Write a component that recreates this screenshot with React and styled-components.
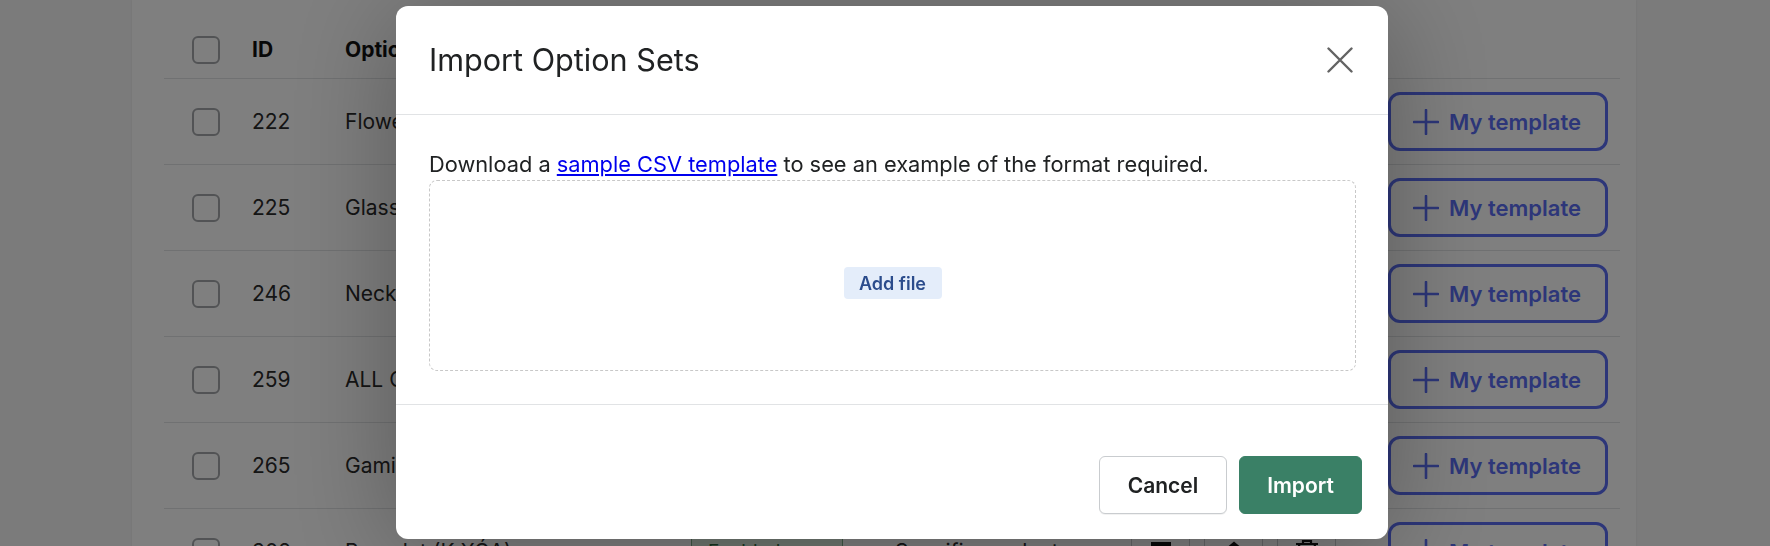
import React from "react";
import styled, { createGlobalStyle } from "styled-components";

const GlobalStyle = createGlobalStyle`
  html, body {
    margin: 0;
    padding: 0;
    height: 546px;
    overflow: hidden;
    background: #f6f6f7;
    font-family: Inter, "Noto Sans", "Liberation Sans", sans-serif;
    color: #202223;
  }
`;

const rows = [
  { id: 222, name: "Flower Options" },
  { id: 225, name: "Glass Engraving" },
  { id: 246, name: "Necklace Options" },
  { id: 259, name: "ALL Collection" },
  { id: 265, name: "Gaming Set" },
  { id: 302, name: "Bracelet (K XÓA)" },
];

const Page = styled.div`
  padding-left: 132px;
  height: 546px;
  overflow: hidden;
`;

const Card = styled.div`
  width: 1504px;
  background: #ffffff;
  padding: 21px 16px 0 32px;
  box-sizing: border-box;
  min-height: 546px;
  box-shadow: 0 0 2px rgba(0, 0, 0, 0.08);
`;

const Row = styled.div`
  display: grid;
  grid-template-columns: 88px 93px 346px 204px 236px 257px 232px;
  align-items: center;
  height: ${(p) => (p.$head ? "57px" : "85px")};
  border-bottom: 1px solid #e1e3e5;
  font-size: 21px;
  color: #2a2a2a;
`;

const Cell = styled.div`
  display: flex;
  align-items: center;
  font-weight: ${(p) => (p.$bold ? 700 : 400)};
  color: ${(p) => (p.$bold ? "#111" : "inherit")};
  white-space: nowrap;
  overflow: hidden;
`;

const CheckCell = styled(Cell)`
  padding-left: 28px;
`;

const Checkbox = styled.span`
  width: 24px;
  height: 24px;
  border: 2px solid #a4a7aa;
  border-radius: 6px;
  background: #fff;
`;

const StatusBadge = styled.span`
  display: inline-flex;
  align-items: center;
  gap: 10px;
  height: 32px;
  padding: 0 16px;
  width: 152px;
  box-sizing: border-box;
  border: 1px solid #7fb08a;
  background: #dff1e3;
  color: #2f6b3f;
  font-size: 19px;
`;

const ActionGroup = styled.div`
  display: flex;
  gap: 14px;
`;

const ActionButton = styled.span`
  width: 59px;
  height: 40px;
  display: flex;
  align-items: center;
  justify-content: center;
  border-left: 1px solid #c9cccf;
  border-right: 1px solid #c9cccf;
  box-sizing: border-box;
`;

const TemplateButton = styled.span`
  display: inline-flex;
  align-items: center;
  gap: 10px;
  width: 220px;
  height: 59px;
  box-sizing: border-box;
  padding-left: 22px;
  border: 3px solid #5a6df2;
  border-radius: 12px;
  color: #5a6df2;
  font-weight: 600;
  font-size: 22px;
`;

const Overlay = styled.div`
  position: fixed;
  inset: 0;
  background: rgba(0, 0, 0, 0.5);
  padding: 6px 0 0 396px;
`;

const Modal = styled.div`
  width: 992px;
  height: 533px;
  background: #ffffff;
  border-radius: 12px;
  box-shadow: 0 10px 110px rgba(0, 0, 0, 0.3);
  display: flex;
  flex-direction: column;
  overflow: hidden;
`;

const ModalHeader = styled.div`
  height: 108px;
  display: flex;
  align-items: center;
  justify-content: space-between;
  padding: 0 35px 0 33px;
  border-bottom: 1px solid #e1e3e5;
  flex-shrink: 0;
`;

const ModalTitle = styled.h2`
  margin: 0;
  font-size: 30.6px;
  font-weight: 400;
  line-height: 36px;
  color: #202223;
`;

const CloseButton = styled.button`
  border: 0;
  background: none;
  padding: 0;
  width: 26px;
  height: 26px;
  display: flex;
  cursor: pointer;
`;

const ModalBody = styled.div`
  padding: 33px 32px 33px 33px;
  border-bottom: 1px solid #e1e3e5;
  flex-shrink: 0;
`;

const Hint = styled.p`
  margin: 0;
  font-size: 21.8px;
  line-height: 32px;
  color: #202223;
`;

const Link = styled.a`
  color: #0000ee;
  text-decoration: underline;
`;

const DropZone = styled.div`
  height: 191px;
  box-sizing: border-box;
  border: 1px dashed #c8c8c8;
  border-radius: 8px;
  display: flex;
  justify-content: center;
  align-items: flex-start;
  padding-top: 86px;
`;

const AddFile = styled.span`
  display: inline-flex;
  align-items: center;
  justify-content: center;
  width: 98px;
  height: 32px;
  border-radius: 4px;
  background: #e4edfa;
  color: #2b4c8c;
  font-weight: 600;
  font-size: 18px;
`;

const ModalFooter = styled.div`
  display: flex;
  justify-content: flex-end;
  gap: 12px;
  padding: 51px 26px 26px;
`;

const FooterButton = styled.button`
  height: 58px;
  padding: 0;
  width: ${(p) => (p.$primary ? "123px" : "128px")};
  border-radius: 6px;
  font-family: inherit;
  font-size: 21px;
  font-weight: 600;
  border: 1px solid ${(p) => (p.$primary ? "#3a8066" : "#c9cccf")};
  background: ${(p) => (p.$primary ? "#3a8066" : "#ffffff")};
  color: ${(p) => (p.$primary ? "#ffffff" : "#202223")};
  box-shadow: ${(p) => (p.$primary ? "none" : "0 1px 0 rgba(0,0,0,0.05)")};
`;

function PlusIcon() {
  return (
    <svg width="26" height="26" viewBox="0 0 26 26">
      <path d="M13 1v24M1 13h24" stroke="currentColor" strokeWidth="2.6" strokeLinecap="round" />
    </svg>
  );
}

function CloseIcon() {
  return (
    <svg width="26" height="26" viewBox="0 0 26 26">
      <path d="M1.5 1.5l23 23M24.5 1.5l-23 23" stroke="#636363" strokeWidth="2.4" strokeLinecap="round" />
    </svg>
  );
}

function Chevron() {
  return (
    <svg width="12" height="8" viewBox="0 0 12 8">
      <path d="M1 7l5-5 5 5" stroke="currentColor" strokeWidth="2" fill="none" />
    </svg>
  );
}

function Actions() {
  return (
    <ActionGroup>
      <ActionButton>
        <svg width="20" height="20" viewBox="0 0 20 20">
          <rect x="0" y="0" width="20" height="20" fill="#111" />
        </svg>
      </ActionButton>
      <ActionButton>
        <svg width="22" height="22" viewBox="0 0 22 22">
          <path d="M11 2v18M4 8l7-6 7 6" stroke="#111" strokeWidth="2.4" fill="none" />
        </svg>
      </ActionButton>
      <ActionButton>
        <svg width="26" height="24" viewBox="0 0 26 24">
          <path d="M2 4h22M9 4V1h8v3M5 4l2 19h12l2-19" stroke="#111" strokeWidth="2.2" fill="none" />
        </svg>
      </ActionButton>
    </ActionGroup>
  );
}

function OptionTable() {
  return (
    <Card>
      <Row $head>
        <CheckCell>
          <Checkbox />
        </CheckCell>
        <Cell $bold>ID</Cell>
        <Cell $bold>Option set</Cell>
        <Cell $bold>Status</Cell>
        <Cell $bold>Applied to</Cell>
        <Cell $bold>Actions</Cell>
        <Cell />
      </Row>
      {rows.map((r) => (
        <Row key={r.id}>
          <CheckCell>
            <Checkbox />
          </CheckCell>
          <Cell>{r.id}</Cell>
          <Cell>{r.name}</Cell>
          <Cell>
            <StatusBadge>
              Enabled <Chevron />
            </StatusBadge>
          </Cell>
          <Cell>Specific products</Cell>
          <Cell>
            <Actions />
          </Cell>
          <Cell>
            <TemplateButton>
              <PlusIcon />
              My template
            </TemplateButton>
          </Cell>
        </Row>
      ))}
    </Card>
  );
}

export default function App() {
  return (
    <>
      <GlobalStyle />
      <Page>
        <OptionTable />
      </Page>
      <Overlay>
        <Modal>
          <ModalHeader>
            <ModalTitle>Import Option Sets</ModalTitle>
            <CloseButton aria-label="Close">
              <CloseIcon />
            </CloseButton>
          </ModalHeader>
          <ModalBody>
            <Hint>
              Download a <Link href="#">sample CSV template</Link> to see an example of the format required.
            </Hint>
            <DropZone>
              <AddFile>Add file</AddFile>
            </DropZone>
          </ModalBody>
          <ModalFooter>
            <FooterButton>Cancel</FooterButton>
            <FooterButton $primary>Import</FooterButton>
          </ModalFooter>
        </Modal>
      </Overlay>
    </>
  );
}
